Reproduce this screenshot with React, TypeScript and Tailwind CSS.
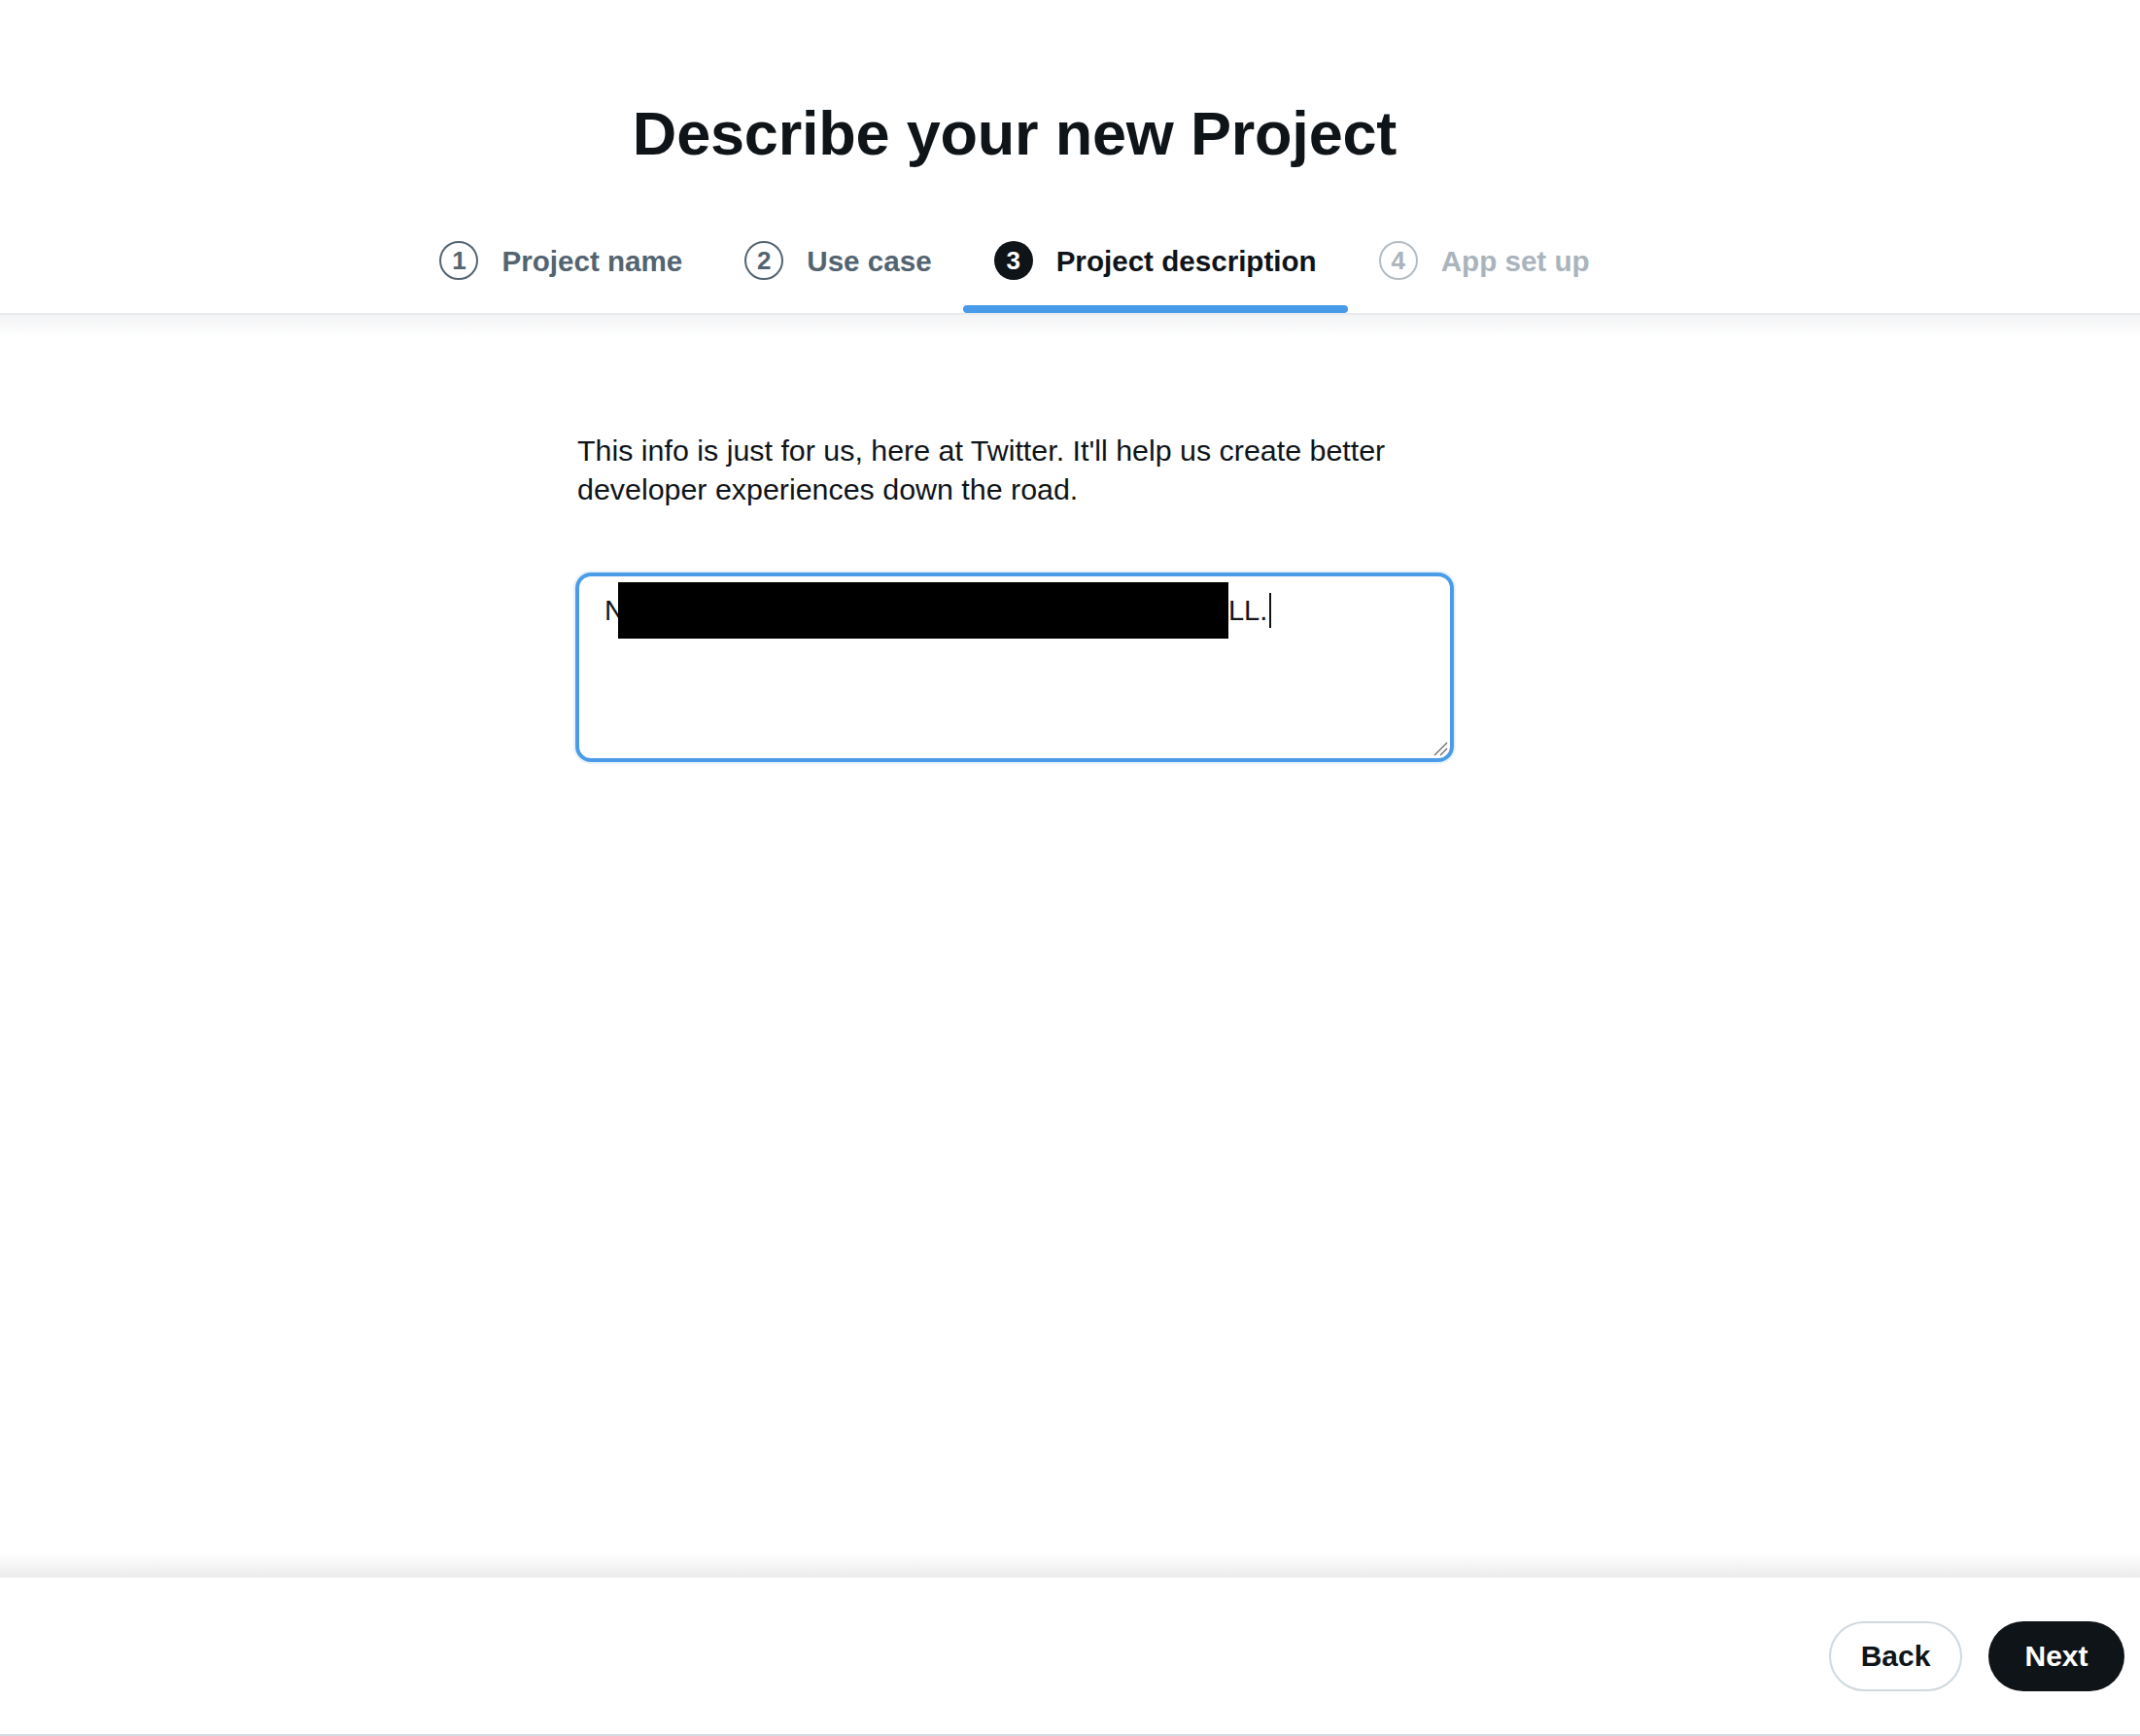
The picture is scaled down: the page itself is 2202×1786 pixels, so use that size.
import React from "react";

type Step = { n: number; label: string; state: "done" | "active" | "todo" };

const steps: Step[] = [
  { n: 1, label: "Project name", state: "done" },
  { n: 2, label: "Use case", state: "done" },
  { n: 3, label: "Project description", state: "active" },
  { n: 4, label: "App set up", state: "todo" },
];

function StepTab({ step }: { step: Step }) {
  const active = step.state === "active";
  const todo = step.state === "todo";
  return (
    <div className="flex flex-col">
      <div className="flex items-center px-8 h-[40px]">
        {active ? (
          <div className="w-[40px] h-[40px] rounded-full bg-[#0f1419] text-white flex items-center justify-center text-[26px] font-bold">
            {step.n}
          </div>
        ) : (
          <div
            className={
              todo
                ? "w-[40px] h-[40px] rounded-full border-2 border-[#b4bcc3] text-[#aab4bc] flex items-center justify-center text-[26px] font-bold"
                : "w-[40px] h-[40px] rounded-full border-2 border-[#536471] text-[#536471] flex items-center justify-center text-[26px] font-bold"
            }
          >
            {step.n}
          </div>
        )}
        <span
          className={
            active
              ? "ml-[24px] pt-[2px] text-[29.6px] font-bold text-[#0f1419]"
              : todo
              ? "ml-[24px] pt-[2px] text-[29.6px] font-bold text-[#aab4bc]"
              : "ml-[24px] pt-[2px] text-[29.6px] font-bold text-[#536471]"
          }
        >
          {step.label}
        </span>
      </div>
      <div className={active ? "mt-[26px] h-[8px] rounded-full bg-[#489be8]" : "mt-[26px] h-[8px]"} />
    </div>
  );
}

export default function App() {
  return (
    <div
      className="h-[1786px] w-[2202px] bg-white flex flex-col text-[#0f1419] overflow-hidden"
      style={{ fontFamily: '"Liberation Sans", Arial, sans-serif' }}
    >
      {/* Header */}
      <header className="border-b-2 border-[#e7ebee] bg-white">
        <div className="w-[2088px] flex flex-col items-center">
          <h1 className="pt-[99px] text-[63px] leading-[76px] font-bold tracking-[-0.2px]">
            Describe your new Project
          </h1>
          <nav className="mt-[73px] flex">
            {steps.map((s) => (
              <StepTab key={s.n} step={s} />
            ))}
          </nav>
        </div>
      </header>
      <div className="h-[22px] bg-linear-to-b from-[#f2f3f4] to-white" />

      {/* Body */}
      <main className="flex-1">
        <div className="w-[2088px] flex justify-center">
          <div className="w-[904px] pt-[97px]">
            <p className="pl-[2px] text-[30.4px] leading-[40px]">
              This info is just for us, here at Twitter. It'll help us create better developer experiences down the road.
            </p>
            <div className="relative mt-[66px] h-[195px] rounded-[16px] border-4 border-[#4a9ce8] shadow-[0_0_0_2px_rgba(74,156,232,0.12)] pl-[26px] pt-[15px]">
              <div className="flex items-center text-[29px] leading-[40px] text-[#14171a]">
                <span>N</span>
                <span className="ml-[-7px] my-[-9px] w-[628px] h-[58px] bg-black" />
                <span>LL.</span>
                <span className="ml-[2px] w-[2px] h-[36px] bg-[#0f1419]" />
              </div>
              <svg
                className="absolute right-[2px] bottom-[2px]"
                width="16"
                height="16"
                viewBox="0 0 16 16"
                fill="none"
                stroke="#6b6b6b"
                strokeWidth="1.3"
              >
                <path d="M15 2 L2 15" />
                <path d="M15 8 L8 15" />
              </svg>
            </div>
          </div>
        </div>
      </main>

      {/* Footer */}
      <div className="h-[26px] bg-linear-to-b from-white to-[#ebebeb]" />
      <footer className="h-[163px] border-b-2 border-[#d6dbdf] bg-white flex items-center justify-end pr-[16px]">
        <button className="w-[137px] h-[72px] rounded-full border-2 border-[#cfd9de] text-[30px] font-bold text-[#0f1419] bg-white">
          Back
        </button>
        <button className="ml-[27px] w-[140px] h-[72px] rounded-full bg-[#0f1419] text-[30px] font-bold text-white">
          Next
        </button>
      </footer>
    </div>
  );
}
